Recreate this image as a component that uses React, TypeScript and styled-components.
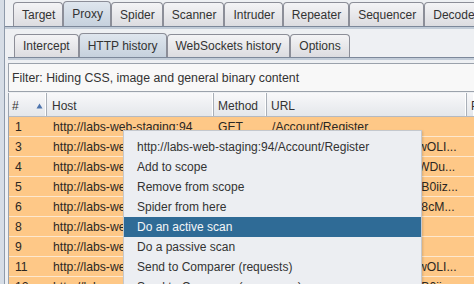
import styled, { createGlobalStyle } from 'styled-components';

const GlobalStyle = createGlobalStyle`
  html, body {
    margin: 0;
    padding: 0;
    overflow: hidden;
  }
  body {
    background: #d6dde6;
    font-family: 'Liberation Sans', Arial, sans-serif;
    font-size: 12px;
    color: #2e2e2e;
  }
`;

const Frame = styled.div`
  position: relative;
  display: flex;
  width: 474px;
  height: 284px;
  overflow: hidden;
  background: #d6dde6;
`;

const Window = styled.div`
  flex: 1;
  min-width: 0;
  margin-left: 4px;
  border-left: 1px solid #8e9aaa;
  background: #eef0f3;
  display: flex;
  flex-direction: column;
`;

const TabBar = styled.div<{ $indent: number; $height: number }>`
  display: flex;
  align-items: flex-end;
  height: ${({ $height }) => $height}px;
  padding-left: ${({ $indent }) => $indent}px;
  white-space: nowrap;
  overflow: hidden;
  flex-shrink: 0;
`;

const Tab = styled.div<{ $active?: boolean; $height: number; $padRight: number }>`
  flex-shrink: 0;
  display: flex;
  align-items: center;
  height: ${({ $height, $active }) => ($active ? $height + 1 : $height)}px;
  padding: 0 ${({ $padRight }) => $padRight}px 0 8px;
  border: 1px solid #8c8e98;
  border-bottom: none;
  border-radius: 4px 4px 0 0;
  box-sizing: border-box;
  color: #333;
  background: ${({ $active }) =>
    $active
      ? 'linear-gradient(#dfe6ee, #c6d1dd)'
      : 'linear-gradient(#f4f4f6, #dcdce0)'};
`;

const TabLine = styled.div`
  height: 3px;
  flex-shrink: 0;
  box-sizing: border-box;
  border-top: 1px solid #7c889a;
  background: #c2ccd8;
`;

const Panel = styled.div`
  display: flex;
  flex-direction: column;
  padding-left: 3px;
  margin-top: 4px;
  flex: 1;
  min-height: 0;
`;

const FilterBox = styled.div`
  margin-top: 3px;
  height: 29px;
  box-sizing: border-box;
  border: 1px solid #9ba2ac;
  border-right: none;
  background: #f8f8f8;
  display: flex;
  align-items: center;
  padding: 1px 0 0 3px;
  color: #333;
  font-size: 12.3px;
  flex-shrink: 0;
`;

const Table = styled.div`
  margin-top: 1px;
  border-left: 1px solid #9aa3ae;
  background: #ffffff;
  flex: 1;
  min-height: 0;
`;

const columns = '38px 167px 53px 200px 1fr';

const HeaderRow = styled.div`
  display: grid;
  grid-template-columns: ${columns};
  height: 24px;
  box-sizing: border-box;
  border-bottom: 1px solid #b4b9c1;
  background: linear-gradient(#f8f8fa, #e4e7eb);
`;

const HeaderCell = styled.div<{ $pad?: number }>`
  display: flex;
  align-items: center;
  justify-content: space-between;
  padding: 2px 3px 0 ${({ $pad }) => $pad ?? 5}px;
  border-right: 1px solid #a9afb8;
  box-shadow: inset -1px 0 0 #ffffff;
  color: #333;
  white-space: nowrap;
  overflow: hidden;
`;

const Row = styled.div`
  display: grid;
  grid-template-columns: ${columns};
  height: 20px;
  box-sizing: border-box;
  border-bottom: 1px solid #fde8cf;
  background: #fec887;
`;

const Cell = styled.div<{ $pad?: number }>`
  display: flex;
  align-items: center;
  padding-left: ${({ $pad }) => $pad ?? 5}px;
  white-space: nowrap;
  overflow: hidden;
  color: #2b2723;
  font-size: 12.2px;
`;

const Menu = styled.div`
  position: absolute;
  left: 123px;
  top: 130px;
  width: 299px;
  box-sizing: border-box;
  padding: 6px 0;
  background: #eceef2;
  border: 1px solid #c4c8ce;
  box-shadow: 1px 1px 2px rgba(0, 0, 0, 0.15);
`;

const MenuItem = styled.div<{ $active?: boolean }>`
  height: 20px;
  line-height: 20px;
  padding-left: 13px;
  white-space: nowrap;
  color: ${({ $active }) => ($active ? '#f4f6f8' : '#333')};
  background: ${({ $active }) => ($active ? '#2f6b96' : 'transparent')};
`;

const SortArrow = () => (
  <svg width="7" height="6" viewBox="0 0 7 6">
    <path d="M3.5 0.5 L6.5 5.5 L0.5 5.5 Z" fill="#4d74ad" />
  </svg>
);

const topTabs = ['Target', 'Proxy', 'Spider', 'Scanner', 'Intruder', 'Repeater', 'Sequencer', 'Decoder'];
const subTabs = ['Intercept', 'HTTP history', 'WebSockets history', 'Options'];

const host = 'http://labs-web-staging:94';
const confirm = '/Account/Confirm?code=Cf';
const confirmLong = '/Account/Confirm?code=Cft';

const rows = [
  { n: 1, method: 'GET', url: '/Account/Register' },
  { n: 3, method: 'POST', url: confirm + 'wOLI...' },
  { n: 4, method: 'GET', url: confirm + 'WDu...' },
  { n: 5, method: 'GET', url: confirmLong + 'B0iiz...' },
  { n: 6, method: 'GET', url: confirmLong + '8cM...' },
  { n: 8, method: 'GET', url: '/Account/Login' },
  { n: 9, method: 'POST', url: '/Account/Login' },
  { n: 11, method: 'GET', url: confirm + 'wOLI...' },
  { n: 12, method: 'GET', url: confirmLong + 'B0iiz...' },
];

const menuItems = [
  'http://labs-web-staging:94/Account/Register',
  'Add to scope',
  'Remove from scope',
  'Spider from here',
  'Do an active scan',
  'Do a passive scan',
  'Send to Comparer (requests)',
  'Send to Comparer (responses)',
];

export default function App() {
  return (
    <>
      <GlobalStyle />
      <Frame>
        <Window>
          <TabBar $indent={8} $height={26}>
            {topTabs.map((t) => (
              <Tab key={t} $height={24} $padRight={7} $active={t === 'Proxy'}>
                {t}
              </Tab>
            ))}
          </TabBar>
          <TabLine />
          <Panel>
            <TabBar $indent={6} $height={24}>
              {subTabs.map((t) => (
                <Tab key={t} $height={23} $padRight={8} $active={t === 'HTTP history'}>
                  {t}
                </Tab>
              ))}
            </TabBar>
            <TabLine />
            <FilterBox>Filter: Hiding CSS, image and general binary content</FilterBox>
            <Table>
              <HeaderRow>
                <HeaderCell $pad={3}>
                  #<SortArrow />
                </HeaderCell>
                <HeaderCell>Host</HeaderCell>
                <HeaderCell $pad={4}>Method</HeaderCell>
                <HeaderCell $pad={4}>URL</HeaderCell>
                <HeaderCell $pad={4}>Params</HeaderCell>
              </HeaderRow>
              {rows.map((r) => (
                <Row key={r.n}>
                  <Cell $pad={6}>{r.n}</Cell>
                  <Cell $pad={6}>{host}</Cell>
                  <Cell $pad={4}>{r.method}</Cell>
                  <Cell $pad={5}>{r.url}</Cell>
                  <Cell />
                </Row>
              ))}
            </Table>
          </Panel>
        </Window>
        <Menu>
          {menuItems.map((m) => (
            <MenuItem key={m} $active={m === 'Do an active scan'}>
              {m}
            </MenuItem>
          ))}
        </Menu>
      </Frame>
    </>
  );
}
